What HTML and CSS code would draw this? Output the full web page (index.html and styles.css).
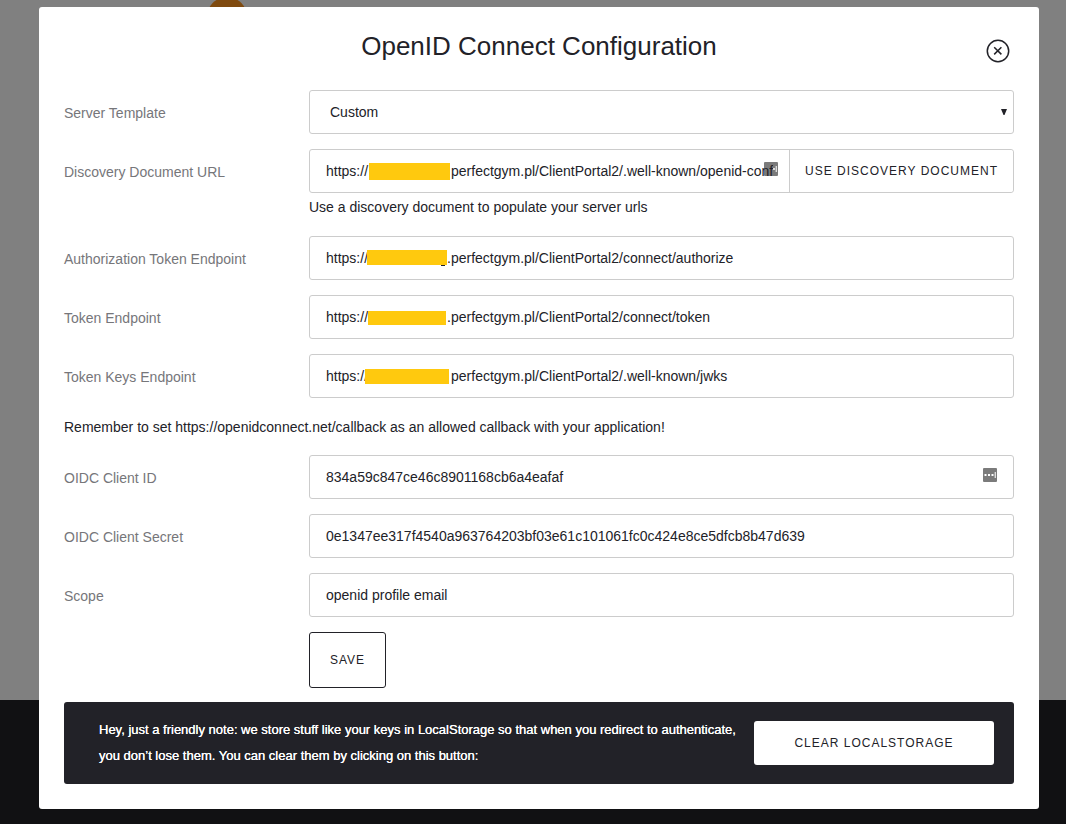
FILE: index.html
```html
<!DOCTYPE html>
<html lang="en">
<head>
<meta charset="utf-8">
<title>OpenID Connect Configuration</title>
<meta name="viewport" content="width=device-width, initial-scale=1">
<link rel="stylesheet" href="styles.css">
</head>
<body>
<div class="backdrop" aria-hidden="true">
  <div class="backdrop-main"><span class="step-dot"></span></div>
  <div class="backdrop-footer"></div>
</div>
<main class="modal" role="dialog" aria-labelledby="title">
  <header class="modal-header">
    <h1 class="title" id="title">OpenID Connect Configuration</h1>
    <button class="close" type="button" aria-label="Close">
      <svg width="24" height="24" viewBox="0 0 24 24" fill="none" stroke="#222228"><circle cx="12" cy="12" r="10.7" stroke-width="1.5"/><path d="M8.2 8.2l7.2 7.2M15.4 8.2l-7.2 7.2" stroke-width="1.5"/></svg>
    </button>
  </header>
  <form class="form">
    <div class="row">
      <label class="label" for="template">Server Template</label>
      <div class="field select-field">
        <select class="select" id="template"><option>Custom</option></select>
        <svg class="arrow" width="6" height="6" viewBox="0 0 6 6"><path d="M0 0h6L3.5 6h-1z" fill="#222228"/></svg>
      </div>
    </div>
    <div class="row">
      <label class="label" for="discovery">Discovery Document URL</label>
      <div class="stack">
        <div class="field">
          <div class="url">
            <span>https://</span><span class="mask mask-tall"></span>
            <input class="input" id="discovery" type="text" value="perfectgym.pl/ClientPortal2/.well-known/openid-conf">
            <svg class="badge" width="14" height="14" viewBox="0 0 14 14"><rect width="14" height="14" rx="1" fill="#7b7b7b"/><path d="M9 7h2" stroke="#ddd" stroke-width="2"/><path d="M12.3 4v6" stroke="#ddd" stroke-width="1.4"/></svg>
          </div>
          <button class="discover" type="button">USE DISCOVERY DOCUMENT</button>
        </div>
        <p class="hint">Use a discovery document to populate your server urls</p>
      </div>
    </div>
    <div class="row">
      <label class="label" for="authorize">Authorization Token Endpoint</label>
      <div class="field url">
        <span>https://</span><span class="mask mask-auth"></span>
        <input class="input" id="authorize" type="text" value=".perfectgym.pl/ClientPortal2/connect/authorize">
      </div>
    </div>
    <div class="row">
      <label class="label" for="token">Token Endpoint</label>
      <div class="field url">
        <span>https://</span><span class="mask mask-token"></span>
        <input class="input" id="token" type="text" value=".perfectgym.pl/ClientPortal2/connect/token">
      </div>
    </div>
    <div class="row">
      <label class="label" for="keys">Token Keys Endpoint</label>
      <div class="field url">
        <span>https://</span><span class="mask mask-keys"></span>
        <input class="input" id="keys" type="text" value="perfectgym.pl/ClientPortal2/.well-known/jwks">
      </div>
    </div>
    <p class="reminder">Remember to set https://openidconnect.net/callback as an allowed callback with your application!</p>
    <div class="row">
      <label class="label" for="client">OIDC Client ID</label>
      <div class="field url">
        <input class="input" id="client" type="text" value="834a59c847ce46c8901168cb6a4eafaf">
        <svg class="client-badge" width="14" height="14" viewBox="0 0 14 14"><rect width="14" height="14" rx="1" fill="#7b7b7b"/><path d="M1.5 7h2M5 7h2M8.5 7h2" stroke="#fff" stroke-width="2"/><path d="M12.3 4v6" stroke="#ddd" stroke-width="1.4"/></svg>
      </div>
    </div>
    <div class="row">
      <label class="label" for="secret">OIDC Client Secret</label>
      <div class="field url">
        <input class="input" id="secret" type="text" value="0e1347ee317f4540a963764203bf03e61c101061fc0c424e8ce5dfcb8b47d639">
      </div>
    </div>
    <div class="row">
      <label class="label" for="scope">Scope</label>
      <div class="field url">
        <input class="input" id="scope" type="text" value="openid profile email">
      </div>
    </div>
    <div class="actions"><button class="save" type="button">SAVE</button></div>
  </form>
  <section class="note">
    <p class="note-text">Hey, just a friendly note: we store stuff like your keys in LocalStorage so that when you redirect to authenticate, you don’t lose them. You can clear them by clicking on this button:</p>
    <button class="clear" type="button">CLEAR LOCALSTORAGE</button>
  </section>
</main>
</body>
</html>
```
FILE: styles.css
```css
* { box-sizing: border-box; }
body {
  margin: 0;
  padding: 7px 27px 15px 39px;
  background: #111113;
  color: #222228;
  font: 14px/20px "Liberation Sans", Arial, sans-serif;
}
h1, p { margin: 0; }
button, input, select { font: inherit; color: inherit; margin: 0; }
button { cursor: pointer; background: #fff; }

/* Dimmed page behind the dialog */
.backdrop {
  position: fixed;
  inset: 0;
  display: flex;
  flex-direction: column;
}
.backdrop-main { flex: 1; background: #808080; overflow: hidden; position: relative; }
.backdrop-footer { height: 124px; background: #111113; }
.step-dot {
  position: absolute;
  top: -3px;
  left: 207px;
  width: 40px;
  height: 40px;
  border-radius: 50%;
  background: #7f4a0f;
}

.modal {
  position: relative;
  max-width: 1000px;
  padding: 25px;
  border-radius: 3px;
  background: #fff;
}
.modal-header {
  display: grid;
  grid-template-columns: 28px 1fr 28px;
  align-items: start;
  height: 58px;
}
.title {
  grid-column: 2;
  font-size: 26px;
  line-height: 28px;
  font-weight: 400;
  text-align: center;
}
.close {
  width: 24px;
  height: 24px;
  margin-top: 7px;
  padding: 0;
  border: 0;
  background: none;
}
.close svg { display: block; }

.form { display: flex; flex-direction: column; gap: 15px; }
.row {
  display: grid;
  grid-template-columns: 245px minmax(0, 1fr);
  align-items: start;
}
.label { padding-top: 13px; color: #76767a; }
.field {
  display: flex;
  height: 44px;
  border: 1px solid #ccc;
  border-radius: 3px;
  background: #fff;
}
.select-field { position: relative; }
.select {
  flex: 1;
  appearance: none;
  padding: 0 20px;
  border: 0;
  background: none;
}
.arrow { position: absolute; right: 6px; top: 18px; }
.url {
  position: relative;
  display: flex;
  flex: 1;
  align-items: center;
  min-width: 0;
  padding: 0 16px;
}
.input {
  position: relative;
  z-index: 1;
  flex: 1;
  min-width: 0;
  height: 40px;
  padding: 0;
  border: 0;
  background: none;
  outline: 0;
}
.mask { height: 15px; background: #ffc90e; }
.mask-tall { width: 81px; height: 17px; margin: 0 1px; }
.mask-auth { width: 80px; margin-left: -1px; margin-bottom: 2px; }
/* descender showing under the mask */
.mask-auth::after {
  content: "";
  display: block;
  width: 4px;
  height: 1px;
  margin: 15px 2px 0 auto;
  background: #222228;
}
.mask-token { width: 78px; height: 14px; margin-right: 1px; margin-top: 2px; }
.mask-keys { width: 84px; margin: 0 2px 0 -3px; }
.badge { position: absolute; right: 11px; top: 12px; }
.client-badge { flex: none; margin-bottom: 4px; }
.discover {
  padding: 0 15px;
  border: 0;
  border-left: 1px solid #ccc;
  border-radius: 0 3px 3px 0;
  font-size: 12px;
  letter-spacing: 1px;
  white-space: nowrap;
}
.hint { padding: 4px 0 4px; }
.reminder { padding: 4px 0 3px; }
.actions { padding-left: 245px; }
.save {
  height: 56px;
  padding: 0 20px;
  border: 1px solid #222228;
  border-radius: 3px;
  font-size: 12px;
  letter-spacing: 1px;
}
.note {
  display: flex;
  align-items: center;
  gap: 12px;
  margin-top: 14px;
  padding: 15px 20px 15px 35px;
  border-radius: 3px;
  background: #222228;
  color: #fff;
}
.note-text { flex: 1; line-height: 26px; font-size: 13px; text-shadow: 0 0 0 currentColor; }
.clear {
  flex: none;
  width: 240px;
  height: 44px;
  border: 0;
  border-radius: 3px;
  color: #222228;
  font-size: 12px;
  letter-spacing: 1px;
}
```
